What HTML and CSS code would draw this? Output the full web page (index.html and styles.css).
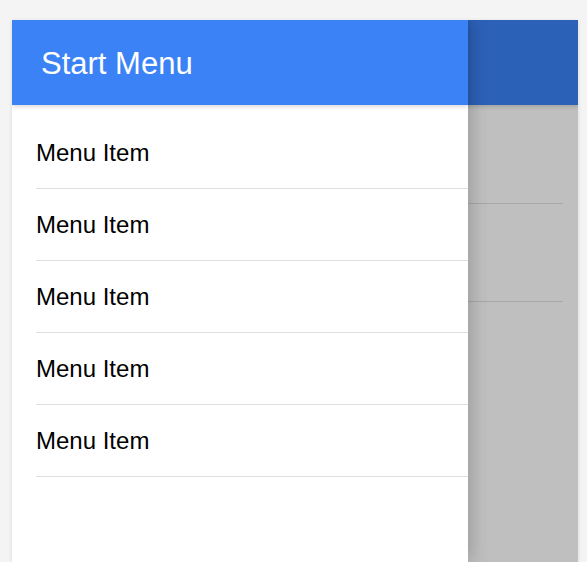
FILE: index.html
```html
<!DOCTYPE html>
<html lang="en">
<head>
<meta charset="utf-8">
<title>Start Menu</title>
<link rel="stylesheet" href="styles.css">
</head>
<body>
<div class="card">
  <header class="appbar"></header>
  <ul class="content-list">
    <li class="content-row"></li>
    <li class="content-row"></li>
  </ul>
  <div class="scrim"></div>
  <nav class="drawer">
    <div class="drawer-header">Start Menu</div>
    <ul class="menu">
      <li class="menu-item">Menu Item</li>
      <li class="menu-item">Menu Item</li>
      <li class="menu-item">Menu Item</li>
      <li class="menu-item">Menu Item</li>
      <li class="menu-item">Menu Item</li>
    </ul>
  </nav>
</div>
</body>
</html>
```
FILE: styles.css
```css
html, body {
  margin: 0;
  padding: 0;
  height: 100%;
  overflow: hidden;
}
body {
  background: #f4f4f5;
  font-family: "Liberation Sans", Arial, sans-serif;
}
.card {
  position: relative;
  margin: 20px 0 0 12px;
  width: 566px;
  height: 542px;
  background: #ffffff;
  box-shadow: 0 1px 4px rgba(0, 0, 0, 0.12);
  overflow: hidden;
}
.appbar {
  height: 85px;
  background: #3b82f6;
  box-shadow: 0 2px 4px rgba(0, 0, 0, 0.15);
}
.content-list {
  list-style: none;
  margin: 0;
  padding: 0 15px 0 24px;
}
.content-row {
  height: 97px;
  border-bottom: 1px solid #e0e0e0;
}
.content-row:first-child {
  height: 98px;
}
.scrim {
  position: absolute;
  inset: 0;
  background: rgba(0, 0, 0, 0.25);
}
.drawer {
  position: absolute;
  top: 0;
  left: 0;
  bottom: 0;
  width: 456px;
  background: #ffffff;
  box-shadow: 4px 0 16px rgba(0, 0, 0, 0.18);
}
.drawer-header {
  height: 85px;
  display: flex;
  align-items: center;
  padding: 2px 0 0 29px;
  box-sizing: border-box;
  background: #3b82f6;
  color: #ffffff;
  font-size: 31px;
  box-shadow: 0 2px 4px rgba(0, 0, 0, 0.15);
}
.menu {
  list-style: none;
  margin: 0;
  padding: 12px 0 0 24px;
}
.menu-item {
  height: 71px;
  display: flex;
  align-items: center;
  border-bottom: 1px solid #e0e0e0;
  font-size: 24px;
  color: #000000;
}
```
